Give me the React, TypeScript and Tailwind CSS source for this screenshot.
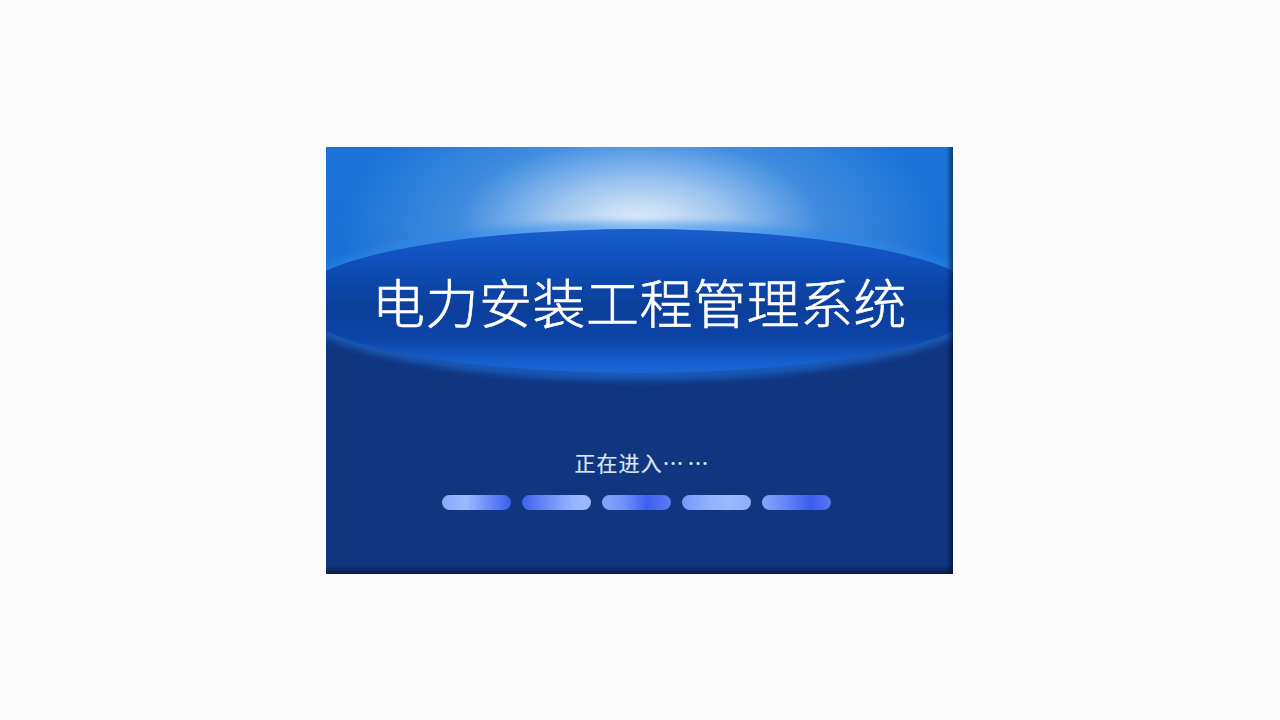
import React from "react";

const bars = [
  "bg-[linear-gradient(90deg,#88a9fb_0%,#9db9ff_35%,#6f8ff8_65%,#3a5ef0_100%)]",
  "bg-[linear-gradient(90deg,#3f63f0_0%,#6f90f8_40%,#97b5ff_75%,#9cb8ff_100%)]",
  "bg-[linear-gradient(90deg,#86a6fb_0%,#7393f8_30%,#3d61f0_65%,#5a7bf4_100%)]",
  "bg-[linear-gradient(90deg,#7597f8_0%,#92b1ff_40%,#9bb8ff_70%,#8daeff_100%)]",
  "bg-[linear-gradient(90deg,#88a8fb_0%,#6585f6_35%,#3a5df0_70%,#5576f3_100%)]",
];

export default function App() {
  return (
    <div className="min-h-screen w-full bg-[#fcfcfc] flex items-center justify-center font-['Noto_Sans_CJK_SC','Noto_Sans',sans-serif]">
      <div className="relative mr-[1px] w-[627px] h-[427px] overflow-hidden bg-[linear-gradient(180deg,#1a74d8_0px,#1a6fd4_150px,#10367f_156px,#10367f_100%)]">
        {/* top glow */}
        <div className="absolute inset-0 bg-[radial-gradient(ellipse_300px_150px_at_50%_80px,rgba(236,244,252,1)_0%,rgba(190,218,246,0.8)_30%,rgba(110,170,234,0.45)_60%,rgba(26,115,216,0)_100%)]" />

        {/* lens band */}
        <div className="absolute left-[-40px] top-[74px] w-[707px] h-[160px] rounded-[50%] bg-[linear-gradient(180deg,rgba(50,140,235,0.55)_0%,rgba(40,130,230,0.45)_50%,rgba(30,110,220,0.6)_100%)] blur-[3px]" />
        <div className="absolute left-[-32px] top-[82px] w-[691px] h-[144px] rounded-[50%] bg-[linear-gradient(180deg,#175fcc_0%,#1255c2_14%,#0d48ac_35%,#0c3e9a_55%,#0d45a8_76%,#1560cf_93%,#1866d4_100%)] blur-[0.5px]" />

        {/* edge shading */}
        <div className="absolute right-0 top-0 bottom-0 w-[7px] bg-[linear-gradient(90deg,rgba(0,10,40,0)_0%,rgba(0,12,40,0.55)_100%)]" />
        <div className="absolute left-0 right-0 bottom-0 h-[9px] bg-[linear-gradient(180deg,rgba(0,10,40,0)_0%,rgba(0,12,40,0.6)_100%)]" />

        <div className="relative flex flex-col items-center">
          <h1 className="mt-[128px] text-[53px] leading-[53px] font-light text-white tracking-[0.5px] [-webkit-text-stroke:0.6px_white]">
            电力安装工程管理系统
          </h1>
          <p className="mt-[122px] ml-[4px] flex items-center text-[21px] leading-[24px] text-[#dce6f6] [-webkit-text-stroke:0.2px_#dce6f6]">
            <span className="tracking-[1px]">正在进入</span>
            <span>…</span>
            <span className="ml-[4px]">…</span>
          </p>
          <div className="mt-[21px] mr-[6px] flex gap-[11px]">
            {bars.map((b, i) => (
              <div key={i} className={`w-[69px] h-[15px] rounded-full ${b}`} />
            ))}
          </div>
        </div>
      </div>
    </div>
  );
}
